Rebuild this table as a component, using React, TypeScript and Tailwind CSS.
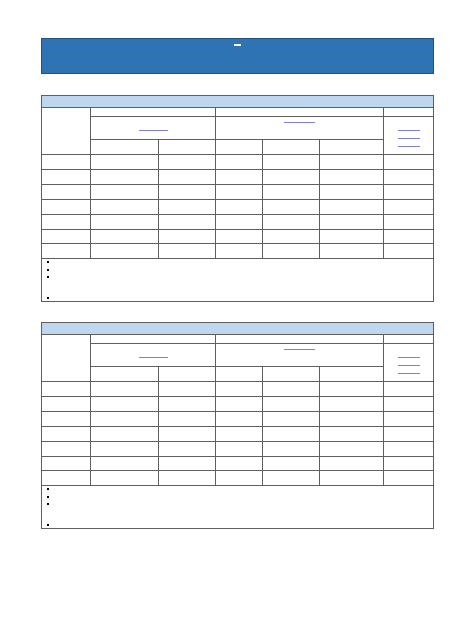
import React from "react";

const dataRows = [0, 1, 2, 3, 4, 5, 6];
const cols = [0, 1, 2, 3, 4, 5, 6];

function Link({ w }: { w: string }) {
  return <span className={`block h-px bg-[#7c7cdb] ${w}`} />;
}

function Bullet({ className = "" }: { className?: string }) {
  return <span className={`block w-[2px] h-[2px] bg-black ${className}`} />;
}

function DataTable() {
  return (
    <div className="w-[393px] border border-[#5f5f5f] bg-[#5f5f5f] grid gap-px grid-cols-[48px_67px_56px_46px_56px_63px_49px] grid-rows-[11px_8px_22px_14px_14px_14px_14px_14px_14px_13px_14px_42px]">
      {/* title bar */}
      <div className="col-span-7 bg-[#bdd7ee]" />

      {/* header */}
      <div className="row-span-3 bg-white" />
      <div className="col-span-2 bg-white" />
      <div className="col-span-3 bg-white" />
      <div className="bg-white" />

      <div className="col-span-2 bg-white flex justify-center pt-[13px]">
        <Link w="w-[29px]" />
      </div>
      <div className="col-span-3 bg-white flex justify-center pt-[5px]">
        <Link w="w-[31px]" />
      </div>
      <div className="row-span-2 bg-white flex flex-col items-center pt-[13px] gap-[7px]">
        <Link w="w-[22px]" />
        <Link w="w-[22px]" />
        <Link w="w-[22px]" />
      </div>

      <div className="bg-white" />
      <div className="bg-white" />
      <div className="bg-white" />
      <div className="bg-white" />
      <div className="bg-white" />

      {/* body */}
      {dataRows.map((r) =>
        cols.map((c) => <div key={`${r}-${c}`} className="bg-white" />)
      )}

      {/* notes */}
      <div className="col-span-7 bg-white pl-[5px] pt-[2px]">
        <Bullet />
        <Bullet className="mt-[6px]" />
        <Bullet className="mt-[5px]" />
        <Bullet className="mt-[19px]" />
      </div>
    </div>
  );
}

export default function App() {
  return (
    <div className="w-[474px] h-[632px] bg-white pt-[38px] pl-[41px] font-['Liberation_Sans',sans-serif]">
      <div className="w-[393px] h-[36px] bg-[#2e74b5] border border-[#23517d] flex justify-center pt-[5px]">
        <span className="block w-[7px] h-[2px] bg-white" />
      </div>
      <div className="mt-[21px]">
        <DataTable />
      </div>
      <div className="mt-[20px]">
        <DataTable />
      </div>
    </div>
  );
}
